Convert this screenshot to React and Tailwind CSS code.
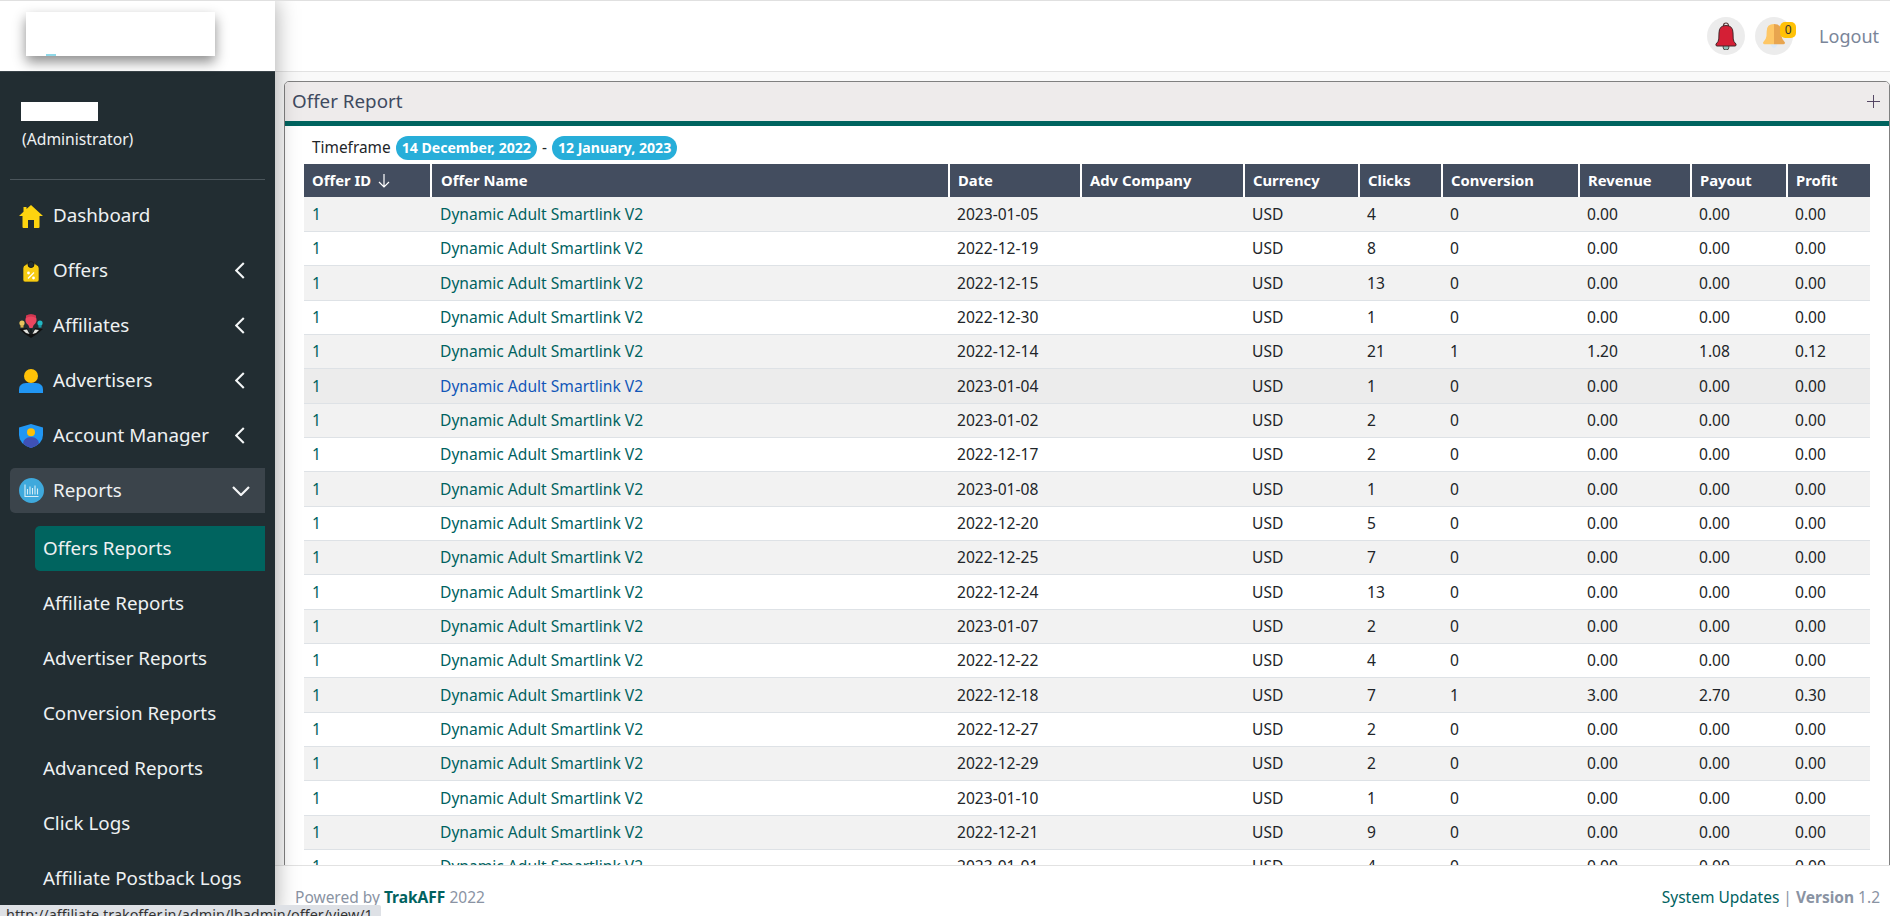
import React from 'react';

const rows = [
  ['2023-01-05', 4, 0, '0.00', '0.00', '0.00'],
  ['2022-12-19', 8, 0, '0.00', '0.00', '0.00'],
  ['2022-12-15', 13, 0, '0.00', '0.00', '0.00'],
  ['2022-12-30', 1, 0, '0.00', '0.00', '0.00'],
  ['2022-12-14', 21, 1, '1.20', '1.08', '0.12'],
  ['2023-01-04', 1, 0, '0.00', '0.00', '0.00'],
  ['2023-01-02', 2, 0, '0.00', '0.00', '0.00'],
  ['2022-12-17', 2, 0, '0.00', '0.00', '0.00'],
  ['2023-01-08', 1, 0, '0.00', '0.00', '0.00'],
  ['2022-12-20', 5, 0, '0.00', '0.00', '0.00'],
  ['2022-12-25', 7, 0, '0.00', '0.00', '0.00'],
  ['2022-12-24', 13, 0, '0.00', '0.00', '0.00'],
  ['2023-01-07', 2, 0, '0.00', '0.00', '0.00'],
  ['2022-12-22', 4, 0, '0.00', '0.00', '0.00'],
  ['2022-12-18', 7, 1, '3.00', '2.70', '0.30'],
  ['2022-12-27', 2, 0, '0.00', '0.00', '0.00'],
  ['2022-12-29', 2, 0, '0.00', '0.00', '0.00'],
  ['2023-01-10', 1, 0, '0.00', '0.00', '0.00'],
  ['2022-12-21', 9, 0, '0.00', '0.00', '0.00'],
  ['2023-01-01', 4, 0, '0.00', '0.00', '0.00'],
];

const columns = [
  ['Offer ID', 'w-[127px]'],
  ['Offer Name', 'w-[518px]'],
  ['Date', 'w-[132px]'],
  ['Adv Company', 'w-[163px]'],
  ['Currency', 'w-[115px]'],
  ['Clicks', 'w-[83px]'],
  ['Conversion', 'w-[137px]'],
  ['Revenue', 'w-[112px]'],
  ['Payout', 'w-[96px]'],
  ['Profit', 'w-[83px]'],
];

function HomeIcon() {
  return (
    <svg viewBox="0 0 24 24" className="w-[24px] h-[24px]">
      <path fill="#fdd40f" d="M12 1 L24 12 L20.5 12 L20.5 23 Q20.5 24 19.5 24 L15 24 L15 16 L9 16 L9 24 L4.5 24 Q3.5 24 3.5 23 L3.5 12 L0 12 L4.5 7.8 L4.5 3 L7.5 3 L7.5 5 Z" />
    </svg>
  );
}

function TagIcon() {
  return (
    <svg viewBox="0 0 16 22" className="w-[16px] h-[22px]">
      <path fill="#f7cc12" stroke="#171d20" strokeWidth="0.6" d="M8 1 L14.5 5.5 Q16 6.5 16 8 L16 20 Q16 22 14 22 L2 22 Q0 22 0 20 L0 8 Q0 6.5 1.5 5.5 Z" />
      <circle cx="8" cy="4.5" r="3" fill="#222d32" stroke="#11171a" strokeWidth="1" />
      <path stroke="#fff" strokeWidth="1.2" d="M5 18.5 L11 12.5" />
      <circle cx="5.5" cy="13" r="1.4" fill="#fff" />
      <circle cx="10.5" cy="18" r="1.4" fill="#fff" />
    </svg>
  );
}

function AffiliatesIcon() {
  return (
    <svg viewBox="0 0 26 24" className="w-[26px] h-[24px]">
      <path fill="#111" d="M1 15 L9 14 L13 22 L17 14 L25 15 L19 20 L13 24 L7 20 Z" />
      <path fill="#e4e4e0" d="M5 16 L9 15.5 L11.5 20 L8 19 Z M21 16 L17 15.5 L14.5 20 L18 19 Z" />
      <path fill="#111" d="M12.4 15 H13.6 V23 H12.4 Z" />
      <circle cx="13" cy="6" r="5.6" fill="#ea4660" />
      <path fill="#d13650" d="M8 4 Q13 1 18 4 L18 1.5 Q13 -1 8 1.5 Z" />
      <path fill="#ea4660" d="M10 10 H16 L14.5 14 H11.5 Z" />
      <circle cx="4" cy="9" r="2.6" fill="#e7c45f" />
      <rect x="2.5" y="11" width="3" height="2.6" fill="#d8b24e" />
      <circle cx="22" cy="9" r="2.6" fill="#22b8c4" />
      <rect x="20.5" y="11" width="3" height="2.6" fill="#1a98a3" />
    </svg>
  );
}

function PersonIcon() {
  return (
    <svg viewBox="0 0 24 24" className="w-[24px] h-[24px]">
      <circle cx="12" cy="7" r="7" fill="#ffc107" />
      <path fill="#2196f3" d="M0 24 L0 20.5 Q0 14.5 7 14 L17 14 Q24 14.5 24 20.5 L24 24 Z" />
    </svg>
  );
}

function ShieldIcon() {
  return (
    <svg viewBox="0 0 24 24" className="w-[24px] h-[24px]">
      <path fill="#2196f3" d="M12 0 L24 3.5 L24 11 Q24 20 12 24 Q0 20 0 11 L0 3.5 Z" />
      <path fill="#3f51b5" d="M4 19.5 Q4.5 13.5 12 13 Q19.5 13.5 20 19.5 Q17 22.5 12 24 Q7 22.5 4 19.5 Z" />
      <circle cx="12" cy="8.2" r="4" fill="#ffc107" />
    </svg>
  );
}

function ReportIcon() {
  return (
    <svg viewBox="0 0 25 25" className="w-[25px] h-[25px]">
      <circle cx="12.5" cy="12.5" r="12.5" fill="#3fa9dc" />
      <g stroke="#d7eef8" strokeWidth="1.1" fill="none">
        <path d="M6 6.5 V18.5 H19.5" />
        <path d="M8.5 16.5 V11 M11 16.5 V8.5 M13.5 16.5 V10 M16 16.5 V7.5 M18.5 16.5 V10.5" />
      </g>
    </svg>
  );
}

function Chevron({ down }) {
  if (down) {
    return (
      <svg viewBox="0 0 18 10" className="w-[18px] h-[10px]" fill="none" stroke="#f4f6f7" strokeWidth="2.2">
        <path d="M1 1 L9 9 L17 1" />
      </svg>
    );
  }
  return (
    <svg viewBox="0 0 10 18" className="w-[10px] h-[17px]" fill="none" stroke="#f4f6f7" strokeWidth="2.2">
      <path d="M9 1 L1 9 L9 17" />
    </svg>
  );
}

function RedBell() {
  return (
    <svg viewBox="0 0 22 28" className="w-[22px] h-[28px]">
      <circle cx="11" cy="25" r="3" fill="#8fc3b8" stroke="#3f2a2a" strokeWidth="0.8" />
      <path fill="none" stroke="#5a3a3a" strokeWidth="1.2" d="M8.5 4 Q8.5 1 11 1 Q13.5 1 13.5 4" />
      <path fill="#d41f35" stroke="#43262a" strokeWidth="1" d="M11 3.5 Q18 3.5 18 11 L18.2 17 Q18.5 20 21 22 Q21.5 24 20 24 L2 24 Q0.5 24 1 22 Q3.5 20 3.8 17 L4 11 Q4 3.5 11 3.5 Z" />
    </svg>
  );
}

function OrangeBell() {
  return (
    <svg viewBox="0 0 24 26" className="w-[22px] h-[26px]">
      <path fill="#dce8f5" d="M8 21 H16 Q15 26 12 26 Q9 26 8 21 Z" />
      <path fill="#fec766" d="M12 0 Q4 0 4 8 L3.8 13 Q3.5 17 0 20 Q0 22 2 22 L12 22 Z" />
      <path fill="#e8a54f" d="M12 0 Q20 0 20 8 L20.2 13 Q20.5 17 24 20 Q24 22 22 22 L12 22 Z" />
    </svg>
  );
}

function MenuItem({ icon, label, open, chevron }) {
  return (
    <li className={`flex items-center h-[45px] mb-[10px] rounded-l-[5px] pl-[8px] pr-[20px] ${open ? 'bg-[#3b444b]' : ''}`}>
      <span className="w-[26px] flex justify-center shrink-0">{icon}</span>
      <span className="ml-[9px] flex-1 text-[18.8px] text-[#eef1f2]">{label}</span>
      {chevron && <span className={open ? '-mr-[5px]' : ''}><Chevron down={open} /></span>}
    </li>
  );
}

const subItems = ['Offers Reports', 'Affiliate Reports', 'Advertiser Reports', 'Conversion Reports', 'Advanced Reports', 'Click Logs', 'Affiliate Postback Logs'];

function Sidebar() {
  return (
    <aside className="w-[275px] h-full shrink-0 flex flex-col bg-[#222d32] overflow-hidden z-10 shadow-[0_0_22px_rgba(0,0,0,0.35)]">
      <div className="h-[71px] shrink-0 bg-white pl-[26px] pt-[11px] border-b border-[#3a444a]">
        <div className="relative w-[189px] h-[44px] bg-white shadow-[0_6px_12px_rgba(0,0,0,0.45)]">
          <span className="absolute left-[20px] bottom-0 w-[10px] h-[2px] bg-[#8fd8e8]" />
        </div>
      </div>
      <div className="h-[108px] shrink-0 mx-[10px] border-b border-[#4b555b] pl-[11px] pt-[30px]">
        <div className="w-[77px] h-[19px] bg-white" />
        <p className="mt-[8px] ml-[1px] text-[15.7px] leading-[20px] text-[#eef1f2]">(Administrator)</p>
      </div>
      <ul className="pl-[10px] pr-[10px] pt-[13px]">
        <MenuItem icon={<HomeIcon />} label="Dashboard" />
        <MenuItem icon={<TagIcon />} label="Offers" chevron />
        <MenuItem icon={<AffiliatesIcon />} label="Affiliates" chevron />
        <MenuItem icon={<PersonIcon />} label="Advertisers" chevron />
        <MenuItem icon={<ShieldIcon />} label="Account Manager" chevron />
        <MenuItem icon={<ReportIcon />} label="Reports" chevron open />
      </ul>
      <ul className="pl-[35px] pr-[10px] mt-[3px]">
        {subItems.map((label, i) => (
          <li key={label} className={`flex items-center h-[45px] mb-[10px] pl-[8px] rounded-l-[5px] text-[18.8px] text-[#eef1f2] ${i === 0 ? 'bg-[#00645f]' : ''}`}>
            {label}
          </li>
        ))}
      </ul>
    </aside>
  );
}

function Topbar() {
  return (
    <header className="h-[71px] shrink-0 bg-white border-b border-[#e2e2e2] flex items-center justify-end gap-[10px] pr-[11px]">
      <div className="w-[38px] h-[38px] rounded-full bg-[#ececec] flex items-center justify-center">
        <RedBell />
      </div>
      <div className="relative w-[38px] h-[38px] rounded-full bg-[#ececec] flex items-center justify-center">
        <OrangeBell />
        <span className="absolute top-[5px] -right-[3px] w-[16px] h-[16px] rounded-[5px] bg-[#ffc107] text-[12px] leading-[16px] text-center text-[#333]">0</span>
      </div>
      <a className="ml-[16px] text-[18px] text-[#7a8599]">Logout</a>
    </header>
  );
}

function ReportTable() {
  return (
    <table className="table-fixed w-[1566px] border-collapse text-[15.6px] text-[#212529]">
      <colgroup>
        {columns.map(([name, width]) => <col key={name} className={width} />)}
      </colgroup>
      <thead>
        <tr className="bg-[#434d5f] text-white h-[33px] text-[14.8px]">
          {columns.map(([name], i) => (
            <th key={name} className={`text-left font-bold pr-[8px] py-0 ${i === 1 ? 'pl-[9px]' : 'pl-[8px]'} ${i < 9 ? 'border-r-2 border-white' : ''}`}>
              <span className="inline-flex items-center">
                {name}
                {i === 0 && (
                  <svg viewBox="0 0 12 14" className="ml-[7px] w-[12px] h-[14px]" fill="none" stroke="#fff" strokeWidth="1.2">
                    <path d="M6 0 V13 M1 8 L6 13 L11 8" />
                  </svg>
                )}
              </span>
            </th>
          ))}
        </tr>
      </thead>
      <tbody>
        {rows.map((r, i) => (
          <tr key={i} className={`${i % 3 === 2 ? 'h-[35px]' : 'h-[34px]'} border-b border-[#dee2e6] ${i === 5 ? 'bg-[#ececec]' : i % 2 === 0 ? 'bg-[#f2f2f2]' : 'bg-white'}`}>
            <td className="px-[8px] pt-[2px] pb-0 text-[#00625f]">1</td>
            <td className={`pl-[9px] pr-[8px] pt-[2px] pb-0 ${i === 5 ? 'text-[#1257b8]' : 'text-[#00625f]'}`}>Dynamic Adult Smartlink V2</td>
            <td className="px-[8px] pt-[2px] pb-0">{r[0]}</td>
            <td className="px-[8px] pt-[2px] pb-0"></td>
            <td className="px-[8px] pt-[2px] pb-0">USD</td>
            <td className="px-[8px] pt-[2px] pb-0">{r[1]}</td>
            <td className="px-[8px] pt-[2px] pb-0">{r[2]}</td>
            <td className="px-[8px] pt-[2px] pb-0">{r[3]}</td>
            <td className="px-[8px] pt-[2px] pb-0">{r[4]}</td>
            <td className="px-[8px] pt-[2px] pb-0">{r[5]}</td>
          </tr>
        ))}
      </tbody>
    </table>
  );
}

function Card() {
  return (
    <section className="h-[900px] bg-white border border-[#808080] rounded-t-[5px] overflow-hidden">
      <div className="h-[39px] bg-[#eeebeb] flex items-center justify-between pl-[7px] pr-[9px]">
        <h2 className="text-[18.8px] text-[#3f4a60]">Offer Report</h2>
        <svg viewBox="0 0 14 14" className="w-[13px] h-[13px]" stroke="#4a3a5a" strokeWidth="1">
          <path d="M7 0 V14 M0 7 H14" />
        </svg>
      </div>
      <div className="h-[5px] bg-[#00645f]" />
      <div className="pl-[19px]">
        <div className="flex items-center h-[24px] mt-[10px] mb-[4px] text-[15.4px] text-[#212529] pl-[8px]">
          <span>Timeframe</span>
          <span className="ml-[5px] h-[24px] px-[6px] rounded-full bg-[#27aed9] text-white text-[14.1px] font-bold leading-[24px]">14 December, 2022</span>
          <span className="mx-[5px]">-</span>
          <span className="h-[24px] px-[6px] rounded-full bg-[#27aed9] text-white text-[14.1px] font-bold leading-[24px]">12 January, 2023</span>
        </div>
        <ReportTable />
      </div>
    </section>
  );
}

function Footer() {
  return (
    <footer className="h-[51px] shrink-0 bg-white border-t border-[#e2e2e2] flex items-center justify-between pl-[20px] pr-[10px] pt-[13px] text-[15.5px] text-[#8a93a3]">
      <span>Powered by <b className="text-[#00625f]">TrakAFF</b> 2022</span>
      <span><a className="text-[#00625f]">System Updates</a> | <b>Version</b> 1.2</span>
    </footer>
  );
}

export default function App() {
  return (
    <div className="relative flex h-[916px] w-[1890px] overflow-hidden bg-white border-t border-[#e0e0e0] font-['Noto_Sans',sans-serif]">
      <Sidebar />
      <div className="flex-1 min-w-0 h-full flex flex-col">
        <Topbar />
        <main className="flex-1 min-h-0 overflow-hidden bg-[#f9f9f9] pl-[9px] pr-[0px] pt-[9px]">
          <Card />
        </main>
        <Footer />
      </div>
      <div className="absolute left-0 bottom-0 w-[381px] h-[11px] bg-[#dee1e6] z-20 overflow-hidden rounded-tr-[2px] text-[14.4px] leading-[20px] pl-[6px] text-[#333] whitespace-nowrap">
        http://affiliate.trakoffer.in/admin/lbadmin/offer/view/1
      </div>
    </div>
  );
}
